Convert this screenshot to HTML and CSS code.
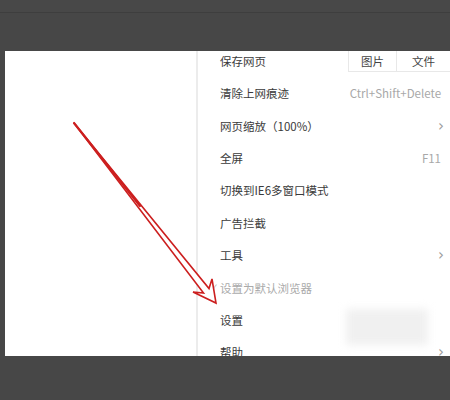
FILE: index.html
```html
<!DOCTYPE html>
<html lang="zh">
<head>
<meta charset="utf-8">
<link rel="stylesheet" href="styles.css">
</head>
<body>
<div class="topbar"></div>
<div class="window">
  <div class="page"></div>
  <div class="menu">
    <div class="row first">
      <span class="label">保存网页</span>
      <div class="btns"><span class="btn">图片</span><span class="btn">文件</span></div>
    </div>
    <div class="row"><span class="label">清除上网痕迹</span><span class="key">Ctrl+Shift+Delete</span></div>
    <div class="row"><span class="label">网页缩放（100%）</span><span class="chev">›</span></div>
    <div class="row"><span class="label">全屏</span><span class="key">F11</span></div>
    <div class="row"><span class="label">切换到IE6多窗口模式</span></div>
    <div class="row"><span class="label">广告拦截</span></div>
    <div class="row"><span class="label">工具</span><span class="chev">›</span></div>
    <div class="row disabled"><span class="check">✓</span><span class="label">设置为默认浏览器</span></div>
    <div class="row"><span class="label">设置</span></div>
    <div class="row"><span class="label">帮助</span><span class="chev">›</span></div>
    <div class="blur"></div>
  </div>
</div>
<svg class="arrow" width="450" height="400" viewBox="0 0 450 400">
  <polygon points="74,123 209,288.5 212,279 216,303 193,292 203.5,293" fill="#fff" stroke="#cc1f1f" stroke-width="1.6" stroke-linejoin="miter"/>
  <line x1="74" y1="123" x2="140" y2="206" stroke="#cc1f1f" stroke-width="2.2" stroke-linecap="round"/>
</svg>
</body>
</html>
```
FILE: styles.css
```css
html, body {
  margin: 0;
  padding: 0;
}
body {
  width: 450px;
  height: 400px;
  background: #474747;
  position: relative;
  overflow: hidden;
  font-family: "Noto Sans CJK SC", "Noto Sans", sans-serif;
}
.topbar {
  height: 12px;
  border-bottom: 1px solid #3e3e3e;
  background: #484848;
}
.window {
  margin-top: 38px;
  margin-left: 5px;
  height: 305px;
  background: #fff;
  display: flex;
  overflow: hidden;
}
.page {
  width: 191px;
  flex: none;
}
.menu {
  flex: 1;
  border-left: 2px solid #ececec;
  position: relative;
}
.row {
  height: 32.4px;
  display: flex;
  align-items: center;
  padding-left: 22px;
  padding-right: 9px;
  font-size: 11.5px;
  color: #3a3a3a;
  position: relative;
}
.row.first {
  height: 26px;
  align-items: flex-start;
  padding-right: 0;
}
.row.first .label {
  line-height: 20px;
}
.label {
  flex: 1;
  white-space: nowrap;
}
.btns {
  display: flex;
  border-left: 1px solid #e8e8e8;
  border-bottom: 1px solid #e8e8e8;
  height: 20px;
}
.btn {
  width: 47px;
  text-align: center;
  line-height: 20px;
  color: #444;
}
.btn + .btn {
  border-left: 1px solid #e8e8e8;
  width: 53px;
}
.key {
  color: #a8a8a8;
  font-size: 11.5px;
}
.chev {
  color: #9a9a9a;
  font-size: 15px;
  font-family: "DejaVu Sans", sans-serif;
  margin-right: -3px;
}
.disabled {
  color: #aaa;
}
.check {
  position: absolute;
  left: 12px;
  font-size: 10px;
  color: #bbb;
}
.blur {
  position: absolute;
  left: 148px;
  top: 258px;
  width: 82px;
  height: 36px;
  background: #f0f0f0;
  filter: blur(4px);
}
.arrow {
  position: absolute;
  left: 0;
  top: 0;
}
```
